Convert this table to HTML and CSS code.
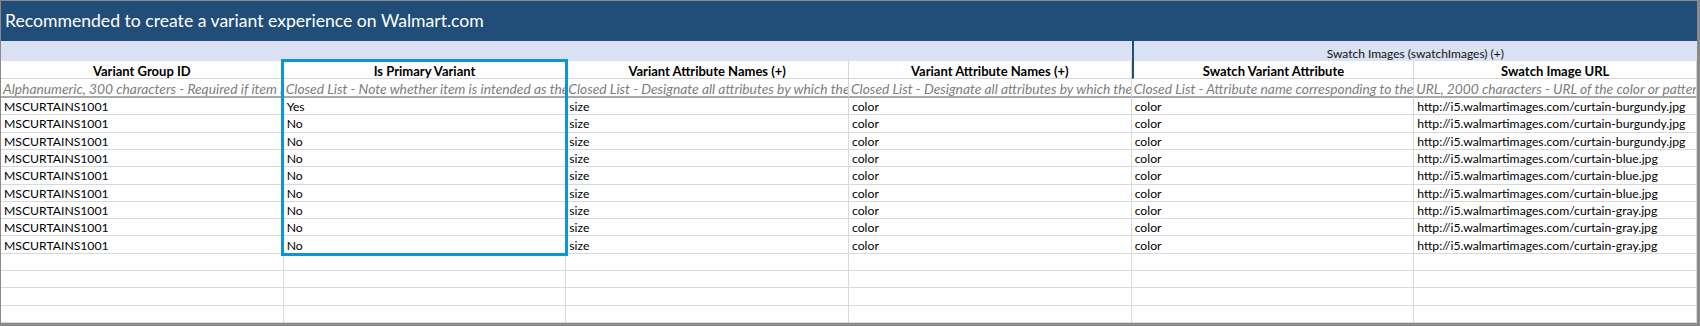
FILE: index.html
```html
<!DOCTYPE html>
<html lang="en">
<head>
<meta charset="utf-8">
<title>Variant sheet</title>
<link rel="stylesheet" href="styles.css">
</head>
<body>
<div class="sheet">
  <div class="title">Recommended to create a variant experience on Walmart.com</div>

  <div class="band band-empty"></div>
  <div class="band band-group">Swatch Images (swatchImages) (+)</div>

  <div class="hd">Variant Group ID</div>
  <div class="hd">Is Primary Variant</div>
  <div class="hd">Variant Attribute Names (+)</div>
  <div class="hd">Variant Attribute Names (+)</div>
  <div class="hd hd-group">Swatch Variant Attribute</div>
  <div class="hd">Swatch Image URL</div>

  <div class="hint">Alphanumeric, 300 characters - Required if item is part of a variant group</div>
  <div class="hint">Closed List - Note whether item is intended as the primary variant</div>
  <div class="hint">Closed List - Designate all attributes by which the item varies</div>
  <div class="hint">Closed List - Designate all attributes by which the item varies</div>
  <div class="hint">Closed List - Attribute name corresponding to the swatch</div>
  <div class="hint">URL, 2000 characters - URL of the color or pattern swatch image</div>

  <div class="c">MSCURTAINS1001</div><div class="c">Yes</div><div class="c">size</div><div class="c">color</div><div class="c">color</div><div class="c">http://i5.walmartimages.com/curtain-burgundy.jpg</div>
  <div class="c">MSCURTAINS1001</div><div class="c">No</div><div class="c">size</div><div class="c">color</div><div class="c">color</div><div class="c">http://i5.walmartimages.com/curtain-burgundy.jpg</div>
  <div class="c">MSCURTAINS1001</div><div class="c">No</div><div class="c">size</div><div class="c">color</div><div class="c">color</div><div class="c">http://i5.walmartimages.com/curtain-burgundy.jpg</div>
  <div class="c">MSCURTAINS1001</div><div class="c">No</div><div class="c">size</div><div class="c">color</div><div class="c">color</div><div class="c">http://i5.walmartimages.com/curtain-blue.jpg</div>
  <div class="c">MSCURTAINS1001</div><div class="c">No</div><div class="c">size</div><div class="c">color</div><div class="c">color</div><div class="c">http://i5.walmartimages.com/curtain-blue.jpg</div>
  <div class="c">MSCURTAINS1001</div><div class="c">No</div><div class="c">size</div><div class="c">color</div><div class="c">color</div><div class="c">http://i5.walmartimages.com/curtain-blue.jpg</div>
  <div class="c">MSCURTAINS1001</div><div class="c">No</div><div class="c">size</div><div class="c">color</div><div class="c">color</div><div class="c">http://i5.walmartimages.com/curtain-gray.jpg</div>
  <div class="c">MSCURTAINS1001</div><div class="c">No</div><div class="c">size</div><div class="c">color</div><div class="c">color</div><div class="c">http://i5.walmartimages.com/curtain-gray.jpg</div>
  <div class="c">MSCURTAINS1001</div><div class="c">No</div><div class="c">size</div><div class="c">color</div><div class="c">color</div><div class="c">http://i5.walmartimages.com/curtain-gray.jpg</div>

  <div class="c"></div><div class="c"></div><div class="c"></div><div class="c"></div><div class="c"></div><div class="c"></div>
  <div class="c"></div><div class="c"></div><div class="c"></div><div class="c"></div><div class="c"></div><div class="c"></div>
  <div class="c"></div><div class="c"></div><div class="c"></div><div class="c"></div><div class="c"></div><div class="c"></div>
  <div class="c"></div><div class="c"></div><div class="c"></div><div class="c"></div><div class="c"></div><div class="c"></div>

  <div class="selection"></div>
</div>
</body>
</html>
```

FILE: styles.css
```css
* { box-sizing: border-box; }

html, body {
  margin: 0;
  padding: 0;
  background: #ffffff;
}

body {
  font-family: Lato, "Open Sans", "Liberation Sans", sans-serif;
  color: #000;
}

.sheet {
  position: relative;
  width: 1700px;
  height: 326px;
  border-style: solid;
  border-color: #8a8a8a;
  border-width: 1px 3px 3px 1px;
  display: grid;
  grid-template-columns: repeat(6, 1fr);
  grid-template-rows: 40px 20px 18px 19px repeat(13, 1fr);
  overflow: hidden;
}

.title {
  grid-column: 1 / -1;
  background: #214e79;
  color: #ffffff;
  font-size: 17.6px;
  display: flex;
  align-items: center;
  padding: 0 4px 2px;
}

.band {
  background: #d9e1f2;
}

.band-empty {
  grid-column: 1 / 5;
}

.band-group {
  grid-column: 5 / 7;
  border-left: 2px solid #214e79;
  font-size: 12px;
  display: flex;
  align-items: flex-end;
  justify-content: center;
  padding-bottom: 0;
  color: #111;
}

.hd {
  font-size: 13px;
  font-weight: 700;
  text-align: center;
  border-right: 1px solid #d6d6d6;
  border-bottom: 1px solid #d6d6d6;
  display: flex;
  align-items: center;
  justify-content: center;
  padding-top: 2px;
  white-space: nowrap;
  overflow: hidden;
}

.hd-group {
  border-left: 2px solid #214e79;
}

.hint {
  font-size: 13.8px;
  font-style: italic;
  color: #7d7d7d;
  white-space: nowrap;
  overflow: hidden;
  padding: 1px 0 0 2px;
  border-right: 1px solid #d6d6d6;
  border-bottom: 2px solid #a9a9a9;
  display: flex;
  align-items: center;
}

.c {
  font-size: 12.2px;
  white-space: nowrap;
  overflow: hidden;
  padding: 1px 3px 0;
  border-right: 1px solid #d9d9d9;
  border-bottom: 1px solid #d9d9d9;
  display: flex;
  align-items: center;
}

.selection {
  position: absolute;
  left: 280px;
  top: 58px;
  width: 287px;
  height: 197px;
  border: 3px solid #0b96d8;
  pointer-events: none;
}
```
